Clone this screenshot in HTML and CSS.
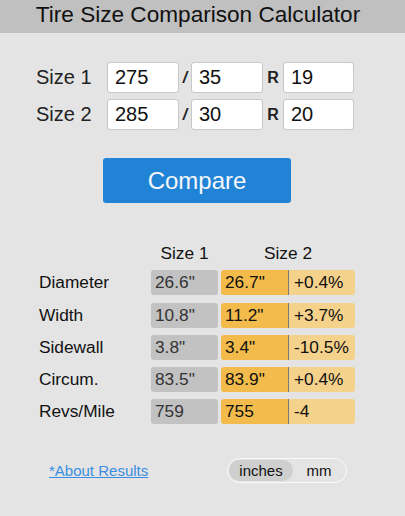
FILE: index.html
```html
<!DOCTYPE html>
<html>
<head>
<meta charset="utf-8">
<link rel="stylesheet" href="styles.css">
</head>
<body>
<div class="header">Tire Size Comparison Calculator</div>
<div class="form">
  <div class="frow">
    <span class="flabel">Size 1</span>
    <input class="fin" value="275">
    <span class="slash">/</span>
    <input class="fin" value="35">
    <span class="rr">R</span>
    <input class="fin fin3" value="19">
  </div>
  <div class="frow">
    <span class="flabel">Size 2</span>
    <input class="fin" value="285">
    <span class="slash">/</span>
    <input class="fin" value="30">
    <span class="rr">R</span>
    <input class="fin fin3" value="20">
  </div>
</div>
<div class="btnwrap"><button class="btn">Compare</button></div>
<div class="results">
  <div class="rhead"><span class="hl"></span><span class="h1">Size 1</span><span class="h2">Size 2</span></div>
  <div class="rrow"><span class="rl">Diameter</span><span class="c1">26.6"</span><span class="c2">26.7"</span><span class="c3">+0.4%</span></div>
  <div class="rrow"><span class="rl">Width</span><span class="c1">10.8"</span><span class="c2">11.2"</span><span class="c3">+3.7%</span></div>
  <div class="rrow"><span class="rl">Sidewall</span><span class="c1">3.8"</span><span class="c2">3.4"</span><span class="c3">-10.5%</span></div>
  <div class="rrow"><span class="rl">Circum.</span><span class="c1">83.5"</span><span class="c2">83.9"</span><span class="c3">+0.4%</span></div>
  <div class="rrow"><span class="rl">Revs/Mile</span><span class="c1">759</span><span class="c2">755</span><span class="c3">-4</span></div>
</div>
<div class="footer">
  <a class="about" href="#">*About Results</a>
  <div class="toggle"><span class="opt on">inches</span><span class="opt">mm</span></div>
</div>
</body>
</html>
```
FILE: styles.css
```css
body {
  margin: 0;
  background: #e4e4e4;
  font-family: "Liberation Sans", Arial, sans-serif;
  color: #111;
  width: 405px;
  height: 516px;
}
.header {
  height: 33px;
  background: #c0c0c0;
  font-size: 22.6px;
  line-height: 30px;
  text-align: center;
  padding-right: 9px;
}
.form {
  padding: 29px 0 0 36px;
  display: flex;
  flex-direction: column;
  gap: 6px;
}
.frow {
  display: flex;
  align-items: center;
  height: 31px;
}
.flabel {
  width: 71px;
  font-size: 20px;
  color: #222;
}
.fin {
  box-sizing: border-box;
  width: 72px;
  height: 31px;
  border: 1px solid #c8c8c8;
  border-radius: 3px;
  background: #fff;
  font-family: "Liberation Sans", Arial, sans-serif;
  font-size: 20px;
  padding: 0 0 0 7px;
  color: #111;
  margin: 0;
}
.fin3 { width: 71px; }
.slash {
  width: 12px;
  text-align: center;
  font-size: 16px;
  font-weight: bold;
  font-style: italic;
  color: #222;
}
.rr {
  width: 20px;
  text-align: center;
  font-size: 16px;
  font-weight: bold;
  color: #222;
}
.btnwrap {
  padding: 28px 0 0 103px;
}
.btn {
  width: 188px;
  height: 45px;
  border: none;
  border-radius: 3px;
  background: #2183d6;
  color: #f4f7fb;
  font-family: "Liberation Sans", Arial, sans-serif;
  font-size: 24px;
  padding: 0;
}
.results {
  padding: 38px 0 0 39px;
  display: flex;
  flex-direction: column;
  gap: 7.3px;
}
.rhead, .rrow {
  display: flex;
  align-items: center;
  font-size: 17.3px;
}
.rhead { height: 24px; margin-bottom: -2px; }
.hl { width: 112px; }
.h1 { width: 67px; text-align: center; margin-right: 3px; }
.h2 { width: 134px; text-align: center; }
.rrow { height: 25px; }
.rl { width: 112px; color: #111; }
.c1, .c2, .c3 {
  box-sizing: border-box;
  height: 25px;
  line-height: 25px;
  padding-left: 4px;
}
.c1 {
  width: 67px;
  background: #c2c2c2;
  color: #333;
  border-radius: 3px;
  margin-right: 3px;
}
.c2 {
  width: 68px;
  background: #f2bb4b;
  border-radius: 3px 0 0 3px;
  border-right: 1px solid #7a7a7a;
}
.c3 {
  width: 66px;
  background: #f5d28b;
  border-radius: 0 3px 3px 0;
  padding-left: 5px;
}
.footer {
  display: flex;
  align-items: center;
  justify-content: space-between;
  padding: 34px 58px 0 49px;
}
.about {
  color: #3a8fe2;
  font-size: 15px;
  text-decoration: underline;
}
.toggle {
  display: flex;
  align-items: center;
  width: 120px;
  height: 25px;
  box-sizing: border-box;
  border: 1px solid #fafafa;
  border-radius: 13px;
  padding: 1px;
  font-size: 15px;
}
.opt {
  height: 21px;
  line-height: 21px;
  text-align: center;
  border-radius: 11px;
}
.opt.on { width: 64px; background: #cfcfcf; }
.opt:not(.on) { flex: 1; }
```
